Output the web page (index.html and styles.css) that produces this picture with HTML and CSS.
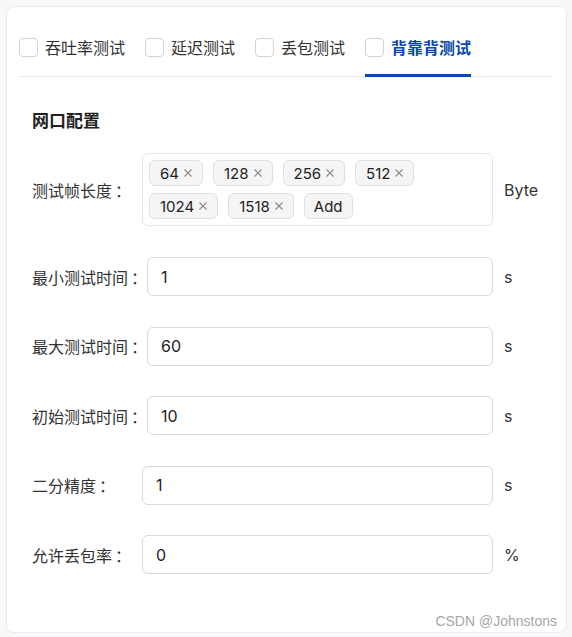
FILE: index.html
```html
<!DOCTYPE html>
<html lang="zh-CN">
<head>
<meta charset="utf-8">
<title>背靠背测试</title>
<link rel="stylesheet" href="styles.css">
</head>
<body>
<div class="page">
  <div class="card">
    <div class="tabs">
      <div class="tab"><span class="cb"></span><span class="tab-text">吞吐率测试</span></div>
      <div class="tab"><span class="cb"></span><span class="tab-text">延迟测试</span></div>
      <div class="tab"><span class="cb"></span><span class="tab-text">丢包测试</span></div>
      <div class="tab active"><span class="cb"></span><span class="tab-text">背靠背测试</span></div>
    </div>
    <div class="form">
      <div class="section-title">网口配置</div>
      <div class="row row-tags">
        <div class="label">测试帧长度<span class="colon">：</span></div>
        <div class="control tagbox">
          <span class="tag">64<svg class="x" viewBox="0 0 8 8"><path d="M0.5 0.5L7.5 7.5M7.5 0.5L0.5 7.5"/></svg></span>
          <span class="tag">128<svg class="x" viewBox="0 0 8 8"><path d="M0.5 0.5L7.5 7.5M7.5 0.5L0.5 7.5"/></svg></span>
          <span class="tag">256<svg class="x" viewBox="0 0 8 8"><path d="M0.5 0.5L7.5 7.5M7.5 0.5L0.5 7.5"/></svg></span>
          <span class="tag">512<svg class="x" viewBox="0 0 8 8"><path d="M0.5 0.5L7.5 7.5M7.5 0.5L0.5 7.5"/></svg></span>
          <span class="tag">1024<svg class="x" viewBox="0 0 8 8"><path d="M0.5 0.5L7.5 7.5M7.5 0.5L0.5 7.5"/></svg></span>
          <span class="tag">1518<svg class="x" viewBox="0 0 8 8"><path d="M0.5 0.5L7.5 7.5M7.5 0.5L0.5 7.5"/></svg></span>
          <span class="tag tag-add">Add</span>
        </div>
        <div class="unit">Byte</div>
      </div>
      <div class="row">
        <div class="label">最小测试时间<span class="colon">：</span></div>
        <div class="control input">1</div>
        <div class="unit">s</div>
      </div>
      <div class="row">
        <div class="label">最大测试时间<span class="colon">：</span></div>
        <div class="control input">60</div>
        <div class="unit">s</div>
      </div>
      <div class="row">
        <div class="label">初始测试时间<span class="colon">：</span></div>
        <div class="control input">10</div>
        <div class="unit">s</div>
      </div>
      <div class="row">
        <div class="label">二分精度<span class="colon">：</span></div>
        <div class="control input">1</div>
        <div class="unit">s</div>
      </div>
      <div class="row">
        <div class="label">允许丢包率<span class="colon">：</span></div>
        <div class="control input">0</div>
        <div class="unit">%</div>
      </div>
    </div>
  </div>
  <div class="watermark">CSDN @Johnstons</div>
</div>
</body>
</html>
```

FILE: styles.css
```css
html, body {
  margin: 0;
  padding: 0;
  background: #f7f8fa;
}
body {
  font-family: Inter, "Noto Sans CJK SC", sans-serif;
  color: #333;
}
.page {
  position: relative;
  height: 637px;
  box-sizing: border-box;
  padding: 6px 5px 0 6px;
}
.card {
  height: 627px;
  box-sizing: border-box;
  background: #fff;
  border: 1px solid #e8eaed;
  border-radius: 8px;
  padding: 0 13px 0 12px;
}
.tabs {
  display: flex;
  gap: 20px;
  padding-top: 20px;
  border-bottom: 1px solid #e9e9e9;
}
.tab {
  display: flex;
  align-items: center;
  height: 50px;
  box-sizing: border-box;
  padding-bottom: 7px;
  border-bottom: 3px solid transparent;
  margin-bottom: -1px;
  font-size: 16px;
  color: #333;
}
.cb {
  width: 19px;
  height: 19px;
  box-sizing: border-box;
  border: 1px solid #d3d3d3;
  border-radius: 4px;
  background: #fff;
  margin-right: 7px;
}
.tab.active {
  border-bottom-color: #0b4aa8;
  color: #0b4aa8;
  font-weight: 700;
}
.form {
  padding-left: 13px;
}
.section-title {
  margin-top: 32px;
  margin-bottom: 20px;
  font-size: 17px;
  line-height: 24px;
  font-weight: 700;
  color: #222;
}
.row {
  display: flex;
  align-items: center;
  margin-bottom: 30.5px;
}
.row-tags {
  margin-bottom: 31px;
}
.label {
  flex: 0 0 auto;
  min-width: 110px;
  box-sizing: border-box;
  font-size: 16px;
  white-space: nowrap;
  color: #333;
}
.colon {
  display: inline-block;
  padding-left: 3px;
}
.control {
  flex: 1 1 auto;
  min-width: 0;
  box-sizing: border-box;
}
.unit {
  flex: 0 0 49px;
  margin-left: 11px;
  font-size: 16px;
  color: #333;
}
.input {
  height: 39px;
  border: 1px solid #d9d9d9;
  border-radius: 6px;
  padding: 0 13px;
  display: flex;
  align-items: center;
  font-size: 16px;
  color: #222;
}
.tagbox {
  display: flex;
  flex-wrap: wrap;
  gap: 7px 10px;
  padding: 6px;
  border: 1px solid #e5e5e5;
  border-radius: 6px;
}
.tag {
  display: inline-flex;
  align-items: center;
  gap: 5px;
  height: 26px;
  box-sizing: border-box;
  padding: 0 10px;
  border: 1px solid #e0e0e0;
  border-radius: 6px;
  background: #f5f5f5;
  font-size: 15px;
  color: #222;
}
.tag-add {
  padding: 0 9px;
}
.x {
  width: 8px;
  height: 8px;
  fill: none;
  stroke: #8a8a8a;
  stroke-width: 1.1;
}
.watermark {
  position: absolute;
  right: 15px;
  top: 613px;
  font-family: "Liberation Sans", Arial, sans-serif;
  font-size: 14px;
  line-height: 16px;
  color: #a6a6a6;
}
```
